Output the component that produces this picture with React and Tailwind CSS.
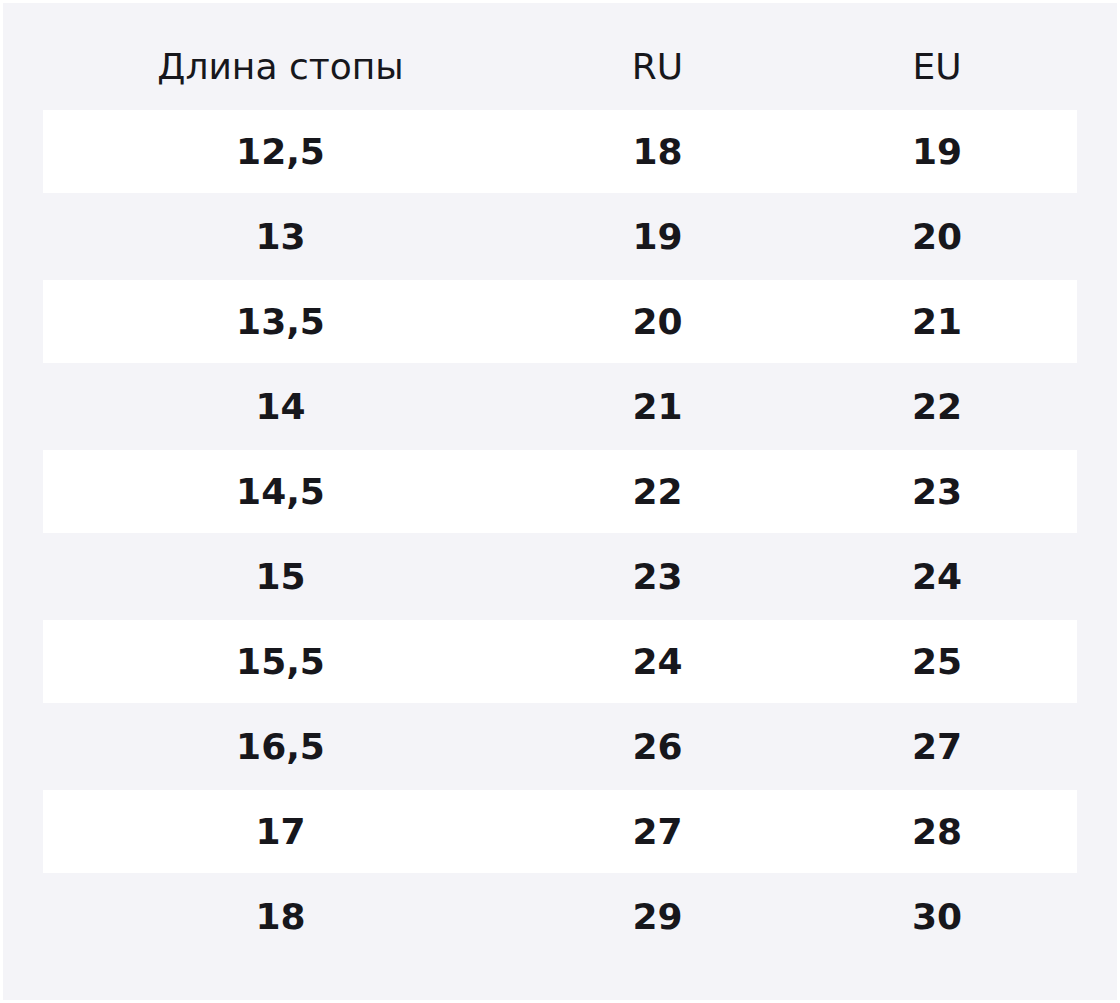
const rows = [
  ["12,5", "18", "19"],
  ["13", "19", "20"],
  ["13,5", "20", "21"],
  ["14", "21", "22"],
  ["14,5", "22", "23"],
  ["15", "23", "24"],
  ["15,5", "24", "25"],
  ["16,5", "26", "27"],
  ["17", "27", "28"],
  ["18", "29", "30"],
];

export default function App() {
  return (
    <div className="bg-white p-[3px] font-['DejaVu_Sans',sans-serif] text-[#17171c]">
      <div className="bg-[#f4f4f8] px-10 pt-10 pb-10">
        <div className="grid grid-cols-[475px_279px_1fr] h-[67px] pt-[6px] text-[36px] leading-none text-center">
          <div>Длина стопы</div>
          <div>RU</div>
          <div>EU</div>
        </div>
        {rows.map((r, i) => (
          <div
            key={i}
            className={
              i % 2 === 0
                ? "grid grid-cols-[475px_279px_1fr] items-center h-[83px] bg-white text-[36px] font-bold text-center"
                : "grid grid-cols-[475px_279px_1fr] items-center h-[87px] text-[36px] font-bold text-center"
            }
          >
            <div>{r[0]}</div>
            <div>{r[1]}</div>
            <div>{r[2]}</div>
          </div>
        ))}
      </div>
    </div>
  );
}
